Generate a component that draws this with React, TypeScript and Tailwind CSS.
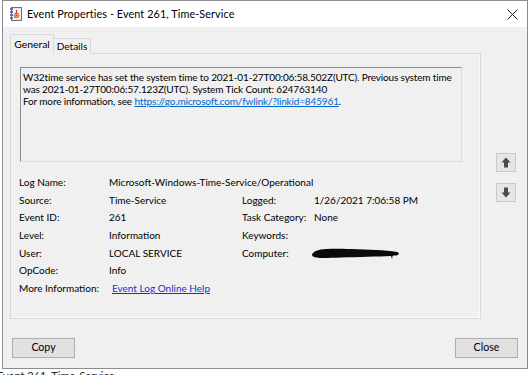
import React from "react";

const font = { fontFamily: 'Lato, "Noto Sans", sans-serif' };

function TitleIcon() {
  return (
    <svg width="14" height="14" viewBox="0 0 14 14" className="shrink-0">
      <rect x="2.5" y="0.5" width="10" height="13" fill="#e8e8f0" stroke="#6a6f8a" />
      <rect x="4" y="2" width="7" height="10" fill="#f6f6fa" />
      <path d="M1 2h3M1 5h3M1 8h3M1 11h3" stroke="#3b5bb5" strokeWidth="1.4" />
      <path d="M7.5 3v3" stroke="#c8372d" strokeWidth="1.2" />
      <circle cx="7.5" cy="8.5" r="2.3" fill="#f2b81e" stroke="#c8372d" strokeWidth="0.8" />
      <circle cx="7.5" cy="8.5" r="0.8" fill="#c8372d" />
    </svg>
  );
}

function ArrowButton({ up }: { up?: boolean }) {
  return (
    <div className="w-[20px] h-[19px] border border-[#c9c9c9] bg-[#e6e6e6] flex items-center justify-center">
      <svg width="10" height="11" viewBox="0 0 10 11">
        {up ? (
          <path d="M5 0.5 L9.5 5.5 H7 V10.5 H3 V5.5 H0.5 Z" fill="#4a4a4a" />
        ) : (
          <path d="M5 10.5 L9.5 5.5 H7 V0.5 H3 V5.5 H0.5 Z" fill="#4a4a4a" />
        )}
      </svg>
    </div>
  );
}

function Row({
  label,
  value,
  label2,
  value2,
}: {
  label: string;
  value?: React.ReactNode;
  label2?: string;
  value2?: React.ReactNode;
}) {
  return (
    <div className="flex h-[17.6px] items-center whitespace-nowrap">
      <div className="w-[90px] shrink-0">{label}</div>
      {label2 === undefined ? (
        <div>{value}</div>
      ) : (
        <>
          <div className="w-[133px] shrink-0">{value}</div>
          <div className="w-[72px] shrink-0">{label2}</div>
          <div>{value2}</div>
        </>
      )}
    </div>
  );
}

function Scribble() {
  return (
    <svg width="90" height="16" viewBox="0 0 90 16">
      <path
        d="M2 7 C6 2, 20 2.5, 40 3 C58 3.5, 74 4, 86 6 C89 7, 88 9.5, 84 9.5 C80 9.5, 82 11, 81 13 L80 10 C66 10.5, 48 11, 30 11.5 C16 12, 4 13, 1.5 10 C0.5 9, 1 8, 2 7 Z"
        fill="#0a0a0a"
      />
    </svg>
  );
}

export default function App() {
  return (
    <div className="w-[531px] h-[375px] bg-white overflow-hidden text-[#000]" style={font}>
      <div className="ml-[2px] w-[526px] h-[369px] border border-[#8c8c8c] bg-[#f0f0f0] flex flex-col">
        {/* title bar */}
        <div className="h-[26px] bg-white flex items-center pl-[6px] pr-[8px] shrink-0">
          <TitleIcon />
          <span className="ml-[4px] text-[10.8px] tracking-[0.1px] text-[#000]">Event Properties - Event 261, Time-Service</span>
          <svg width="11" height="11" viewBox="0 0 11 11" className="ml-auto mr-[1px]">
            <path d="M0.5 0.5 L10.5 10.5 M10.5 0.5 L0.5 10.5" stroke="#222" strokeWidth="1" />
          </svg>
        </div>

        {/* body */}
        <div className="flex-1 flex flex-col text-[10px]">
          <div className="flex pl-[7px] pt-[7px]">
            <div className="w-[471px] shrink-0 flex flex-col">
              {/* tabs */}
              <div className="flex items-end h-[20px] relative z-10">
                <div className="h-[20px] w-[44px] border border-b-0 border-[#d9d9d9] bg-[#f0f0f0] flex items-center justify-center text-[10.4px]">
                  General
                </div>
                <div className="h-[16px] w-[37px] border border-l-0 border-b-0 border-[#d9d9d9] bg-[#f0f0f0] flex items-center justify-center text-[10px]">
                  Details
                </div>
              </div>
              {/* panel */}
              <div className="h-[266px] -mt-px border border-[#d9d9d9] shadow-[inset_-1px_-1px_0_#fbfbfb] pl-[9px] pt-[13px]">
                <div className="w-[442px] h-[95px] border border-[#8e8e8e] border-r-[#dcdcdc] border-b-[#dcdcdc] bg-[#f0f0f0] px-[2px] pt-[3px] leading-[12px] tracking-[-0.15px]">
                  <div className="whitespace-nowrap">
                    W32time service has set the system time to 2021-01-27T00:06:58.502Z(UTC). Previous system time
                  </div>
                  <div className="whitespace-nowrap">was 2021-01-27T00:06:57.123Z(UTC). System Tick Count: 624763140</div>
                  <div className="whitespace-nowrap">
                    For more information, see{" "}
                    <span className="text-[#0066cc] underline">https://go.microsoft.com/fwlink/?linkid=845961</span>.
                  </div>
                </div>

                <div className="mt-[12px] -ml-[1px]">
                  <Row label="Log Name:" value="Microsoft-Windows-Time-Service/Operational" />
                  <Row label="Source:" value="Time-Service" label2="Logged:" value2="1/26/2021 7:06:58 PM" />
                  <Row label="Event ID:" value="261" label2="Task Category:" value2="None" />
                  <Row label="Level:" value="Information" label2="Keywords:" value2="" />
                  <Row
                    label="User:"
                    value="LOCAL SERVICE"
                    label2="Computer:"
                    value2={
                      <div className="-ml-[3px] mt-[2px]">
                        <Scribble />
                      </div>
                    }
                  />
                  <Row label="OpCode:" value="Info" />
                  <Row
                    label="More Information:"
                    value={<span className="ml-[3px] text-[#1a2ecf] underline">Event Log Online Help</span>}
                  />
                </div>
              </div>
            </div>

            {/* arrows */}
            <div className="ml-[15px] pt-[119px] flex flex-col gap-[11px]">
              <ArrowButton up />
              <ArrowButton />
            </div>
          </div>

          {/* buttons */}
          <div className="flex justify-between pl-[9px] pr-[9px] mt-[19px] text-[10.6px]">
            <div className="w-[63px] h-[20px] border border-[#adadad] bg-[#e1e1e1] flex items-center justify-center">
              Copy
            </div>
            <div className="w-[63px] h-[20px] border border-[#adadad] bg-[#e1e1e1] flex items-center justify-center">
              Close
            </div>
          </div>
        </div>
      </div>
      <div className="h-[6px] overflow-hidden">
        <div className="-ml-[3px] text-[11px] leading-[12px] text-[#222] pt-[1px] whitespace-nowrap">Event 261, Time-Service</div>
      </div>
    </div>
  );
}
